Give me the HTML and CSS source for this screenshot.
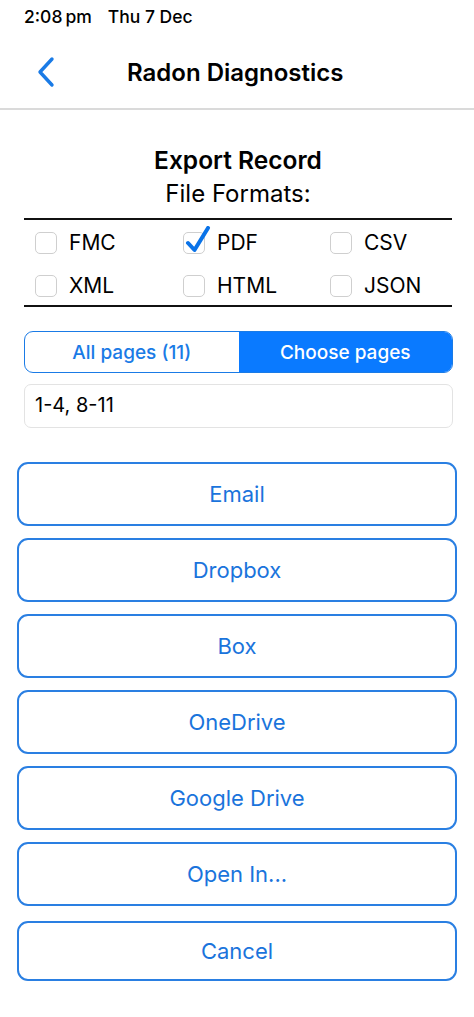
FILE: index.html
```html
<!DOCTYPE html>
<html lang="en">
<head>
<meta charset="utf-8">
<title>Radon Diagnostics</title>
<link rel="stylesheet" href="styles.css">
</head>
<body>
<div class="status">
  <span>2:08&#8201;pm</span><span class="date">Thu 7 Dec</span>
</div>
<header class="nav">
  <svg class="back" width="20" height="32" viewBox="0 0 20 32" aria-hidden="true">
    <path d="M16 3 L4 16 L16 29" fill="none" stroke="#1a7be6" stroke-width="3.4" stroke-linecap="round" stroke-linejoin="round"/>
  </svg>
  <h1 class="title">Radon Diagnostics</h1>
</header>
<main class="content">
  <h2 class="heading">Export Record</h2>
  <p class="subheading">File Formats:</p>
  <div class="formats">
    <label class="fmt"><span class="box"></span>FMC</label>
    <label class="fmt"><span class="box checked"><svg class="tick" width="26" height="28" viewBox="0 0 26 28" aria-hidden="true"><path d="M3 17 L9.5 24 L23 2" fill="none" stroke="#0a73e8" stroke-width="4" stroke-linecap="round" stroke-linejoin="round"/></svg></span>PDF</label>
    <label class="fmt"><span class="box"></span>CSV</label>
    <label class="fmt"><span class="box"></span>XML</label>
    <label class="fmt"><span class="box"></span>HTML</label>
    <label class="fmt"><span class="box"></span>JSON</label>
  </div>
  <div class="segmented">
    <div class="seg">All pages (11)</div>
    <div class="seg active">Choose pages</div>
  </div>
  <div class="field">1-4, 8-11</div>
</main>
<div class="actions">
  <div class="btn">Email</div>
  <div class="btn">Dropbox</div>
  <div class="btn">Box</div>
  <div class="btn">OneDrive</div>
  <div class="btn">Google Drive</div>
  <div class="btn">Open In...</div>
  <div class="btn cancel">Cancel</div>
</div>
</body>
</html>
```
FILE: styles.css
```css
* { box-sizing: border-box; }
html, body { margin: 0; padding: 0; background: #fff; }
body {
  font-family: Inter, "Liberation Sans", Arial, sans-serif;
  color: #000;
  width: 474px;
}
.status {
  height: 34px;
  padding: 6px 0 0 24px;
  font-size: 17.5px;
  font-weight: 500;
  display: flex;
  gap: 16px;
}
.nav {
  height: 76px;
  display: flex;
  align-items: center;
  border-bottom: 2px solid #dadada;
  padding: 2px 0 0 36px;
}
.back { flex: none; }
.title {
  margin: 0 0 0 71px;
  font-size: 24px;
  font-weight: 600;
  letter-spacing: 0;
}
.content { padding: 0 22px 0 24px; }
.heading {
  margin: 34px 0 0;
  text-align: center;
  font-size: 24.5px;
  font-weight: 600;
  line-height: 32px;
}
.subheading {
  margin: 0;
  text-align: center;
  font-size: 24px;
  line-height: 36px;
}
.formats {
  margin-top: 6px;
  border-top: 2px solid #111;
  border-bottom: 2px solid #111;
  display: grid;
  grid-template-columns: 148px 147px 1fr;
  grid-auto-rows: 43px;
  padding: 1px 0 0 11px;
  height: 89px;
}
.fmt {
  display: flex;
  align-items: center;
  font-size: 21px;
}
.box {
  position: relative;
  width: 22px;
  height: 22px;
  border: 1.5px solid #cfcfcf;
  border-radius: 5px;
  margin-right: 12px;
  flex: none;
}
.tick {
  position: absolute;
  left: 1px;
  top: -7px;
}
.segmented {
  margin-top: 24px;
  height: 42px;
  display: flex;
  border: 1.5px solid #1a7be6;
  border-radius: 9px;
  overflow: hidden;
  width: 429px;
}
.seg {
  flex: 1;
  display: flex;
  align-items: center;
  justify-content: center;
  font-size: 19px;
  font-weight: 500;
  color: #1a7be6;
}
.seg.active {
  background: #0a7aff;
  color: #fff;
}
.field {
  margin-top: 11px;
  height: 44px;
  width: 429px;
  border: 1.5px solid #e3e3e3;
  border-radius: 7px;
  padding: 0 0 2px 10px;
  display: flex;
  align-items: center;
  font-size: 20px;
}
.actions {
  padding: 34px 17px 0 17px;
  display: flex;
  flex-direction: column;
  gap: 12px;
}
.btn {
  height: 64px;
  border: 2px solid #2a7fe2;
  border-radius: 11px;
  display: flex;
  align-items: center;
  justify-content: center;
  color: #1a74dc;
  font-size: 22px;
}
.btn.cancel {
  margin-top: 3px;
  height: 60px;
}
```
